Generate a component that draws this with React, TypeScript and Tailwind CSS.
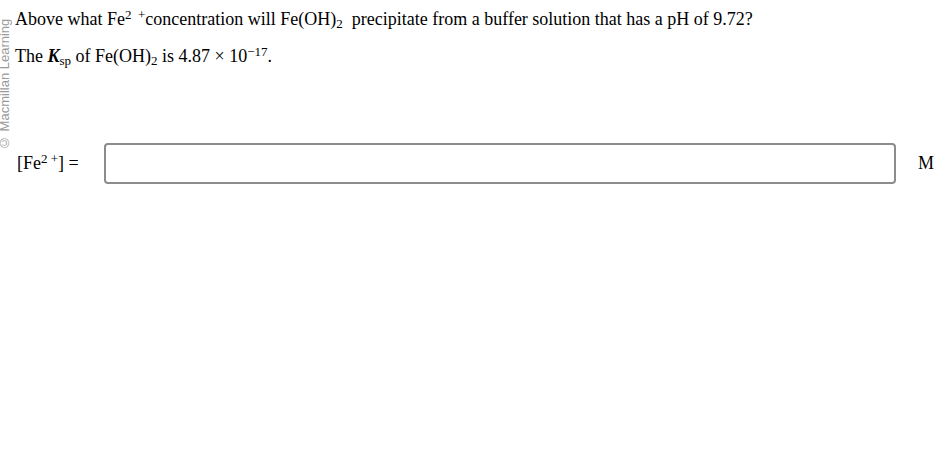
import React from "react";

export default function App() {
  const serif = { fontFamily: '"Liberation Serif", "Times New Roman", serif' };
  return (
    <div className="relative w-[948px] h-[452px] bg-white overflow-hidden text-black" style={serif}>
      <div
        className="absolute left-[-2px] top-[14px] h-[140px] flex items-center justify-center text-[13px] leading-[13px] text-[#9a9a9a] whitespace-nowrap"
        style={{ fontFamily: '"Liberation Sans", Arial, sans-serif', writingMode: "vertical-rl", transform: "rotate(180deg)" }}
      >
        © Macmillan Learning
      </div>
      <div className="pl-[15px] pt-[8px] text-[18px] leading-[22px]">
        <p>
          Above what Fe<sup className="text-[13px]">2&nbsp;&nbsp;+</sup>concentration will Fe(OH)<sub className="text-[13px]">2</sub>&nbsp; precipitate from a buffer solution that has a pH of 9.72?
        </p>
        <p className="mt-[15px]">
          The <i className="font-bold">K</i><sub className="text-[13px]">sp</sub> of Fe(OH)<sub className="text-[13px]">2</sub> is 4.87 × 10<sup className="text-[13px]">−17</sup>.
        </p>
      </div>
      <div className="flex items-center mt-[76px] pl-[17px]">
        <div className="w-[87px] text-[18px]">
          [Fe<sup className="text-[13px]">2&nbsp;+</sup>] =
        </div>
        <div className="w-[792px] h-[41px] border-2 border-[#8c8c8c] rounded-[4px] bg-white"></div>
        <div className="ml-[22px] text-[18px]">M</div>
      </div>
    </div>
  );
}
